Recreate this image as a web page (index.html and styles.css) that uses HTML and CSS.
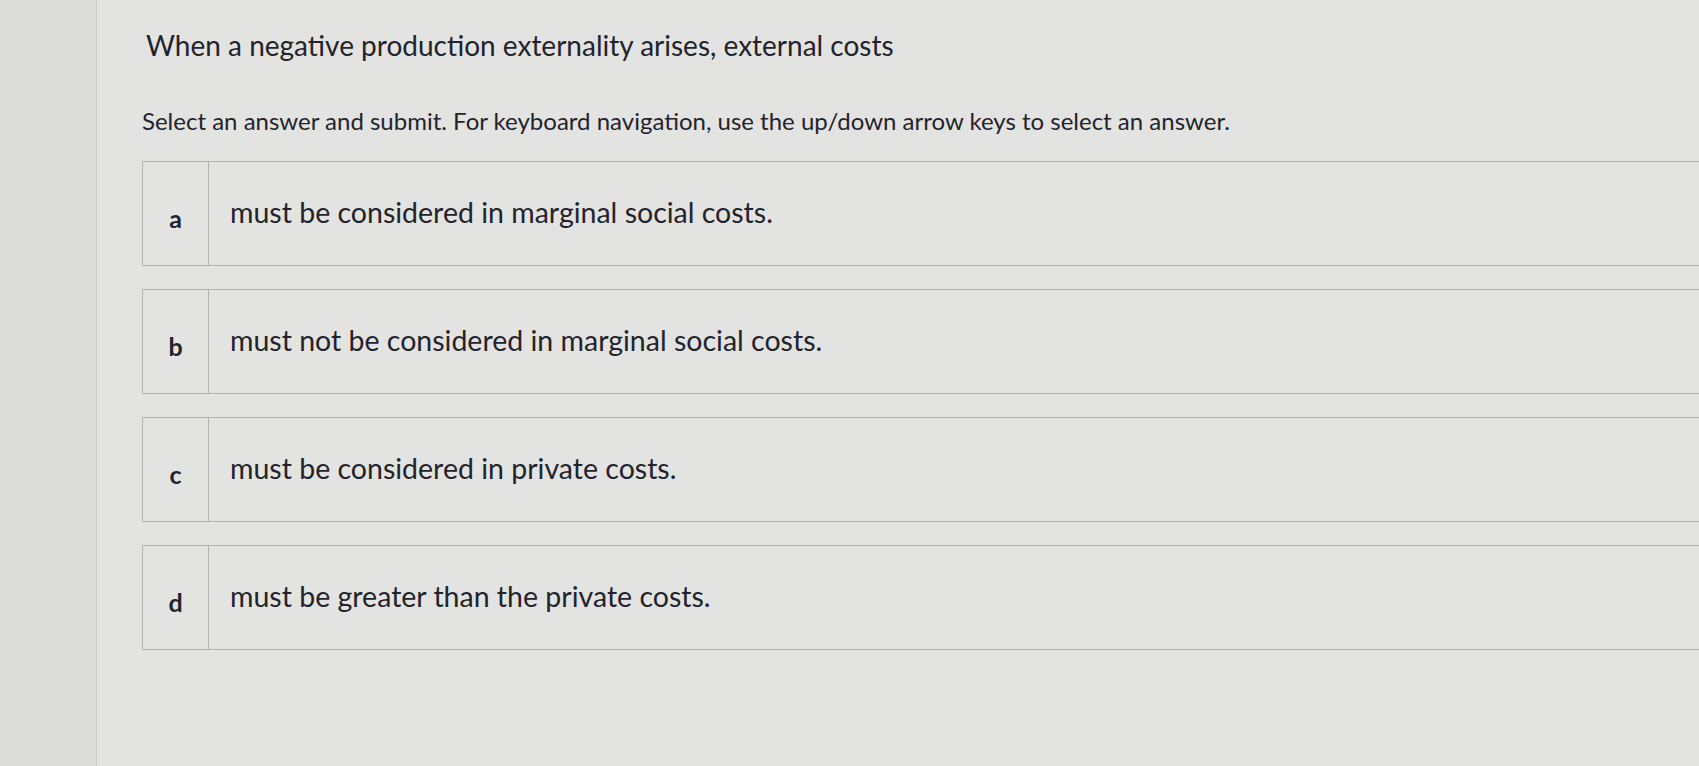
FILE: index.html
```html
<!DOCTYPE html>
<html lang="en">
<head>
<meta charset="utf-8">
<title>Question</title>
<link rel="stylesheet" href="styles.css">
</head>
<body>
<div class="page">
  <aside class="sidebar"></aside>
  <main class="main">
    <h1 class="question">When a negative production externality arises, external costs</h1>
    <p class="instructions">Select an answer and submit. For keyboard navigation, use the up/down arrow keys to select an answer.</p>
    <div class="options" role="radiogroup">
      <div class="option" role="radio" aria-checked="false">
        <div class="letter">a</div>
        <div class="answer">must be considered in marginal social costs.</div>
      </div>
      <div class="option" role="radio" aria-checked="false">
        <div class="letter">b</div>
        <div class="answer">must not be considered in marginal social costs.</div>
      </div>
      <div class="option" role="radio" aria-checked="false">
        <div class="letter">c</div>
        <div class="answer">must be considered in private costs.</div>
      </div>
      <div class="option" role="radio" aria-checked="false">
        <div class="letter">d</div>
        <div class="answer">must be greater than the private costs.</div>
      </div>
    </div>
  </main>
</div>
</body>
</html>
```

FILE: styles.css
```css
html, body {
  margin: 0;
  padding: 0;
  height: 100%;
  background: #e3e4e2;
  font-family: Lato, "Open Sans", "Liberation Sans", sans-serif;
  color: #23232c;
  overflow: hidden;
}

.page {
  display: flex;
  height: 100%;
}

.sidebar {
  width: 96px;
  flex: 0 0 96px;
  background: #dbdcda;
  border-right: 1px solid #cfd0ce;
}

.main {
  flex: 1;
  padding: 28px 0 0 45px;
  min-width: 0;
}

.question {
  margin: 0;
  padding-left: 4px;
  font-size: 28px;
  line-height: 34px;
  font-weight: 400;
}

.instructions {
  margin: 44px 0 0 0;
  font-size: 24px;
  line-height: 30px;
}

.options {
  margin-top: 25px;
  display: flex;
  flex-direction: column;
  gap: 23px;
}

.option {
  display: flex;
  height: 105px;
  box-sizing: border-box;
  border: 1.5px solid #b3b4b4;
  border-right: none;
  margin-right: -2px;
}

.letter {
  width: 66px;
  flex: 0 0 66px;
  box-sizing: border-box;
  border-right: 1.5px solid #b3b4b4;
  text-align: center;
  padding-top: 41px;
  font-size: 25px;
  line-height: 30px;
  font-weight: 700;
}

.answer {
  padding: 34px 0 0 21px;
  font-size: 28.5px;
  line-height: 32px;
}
```
